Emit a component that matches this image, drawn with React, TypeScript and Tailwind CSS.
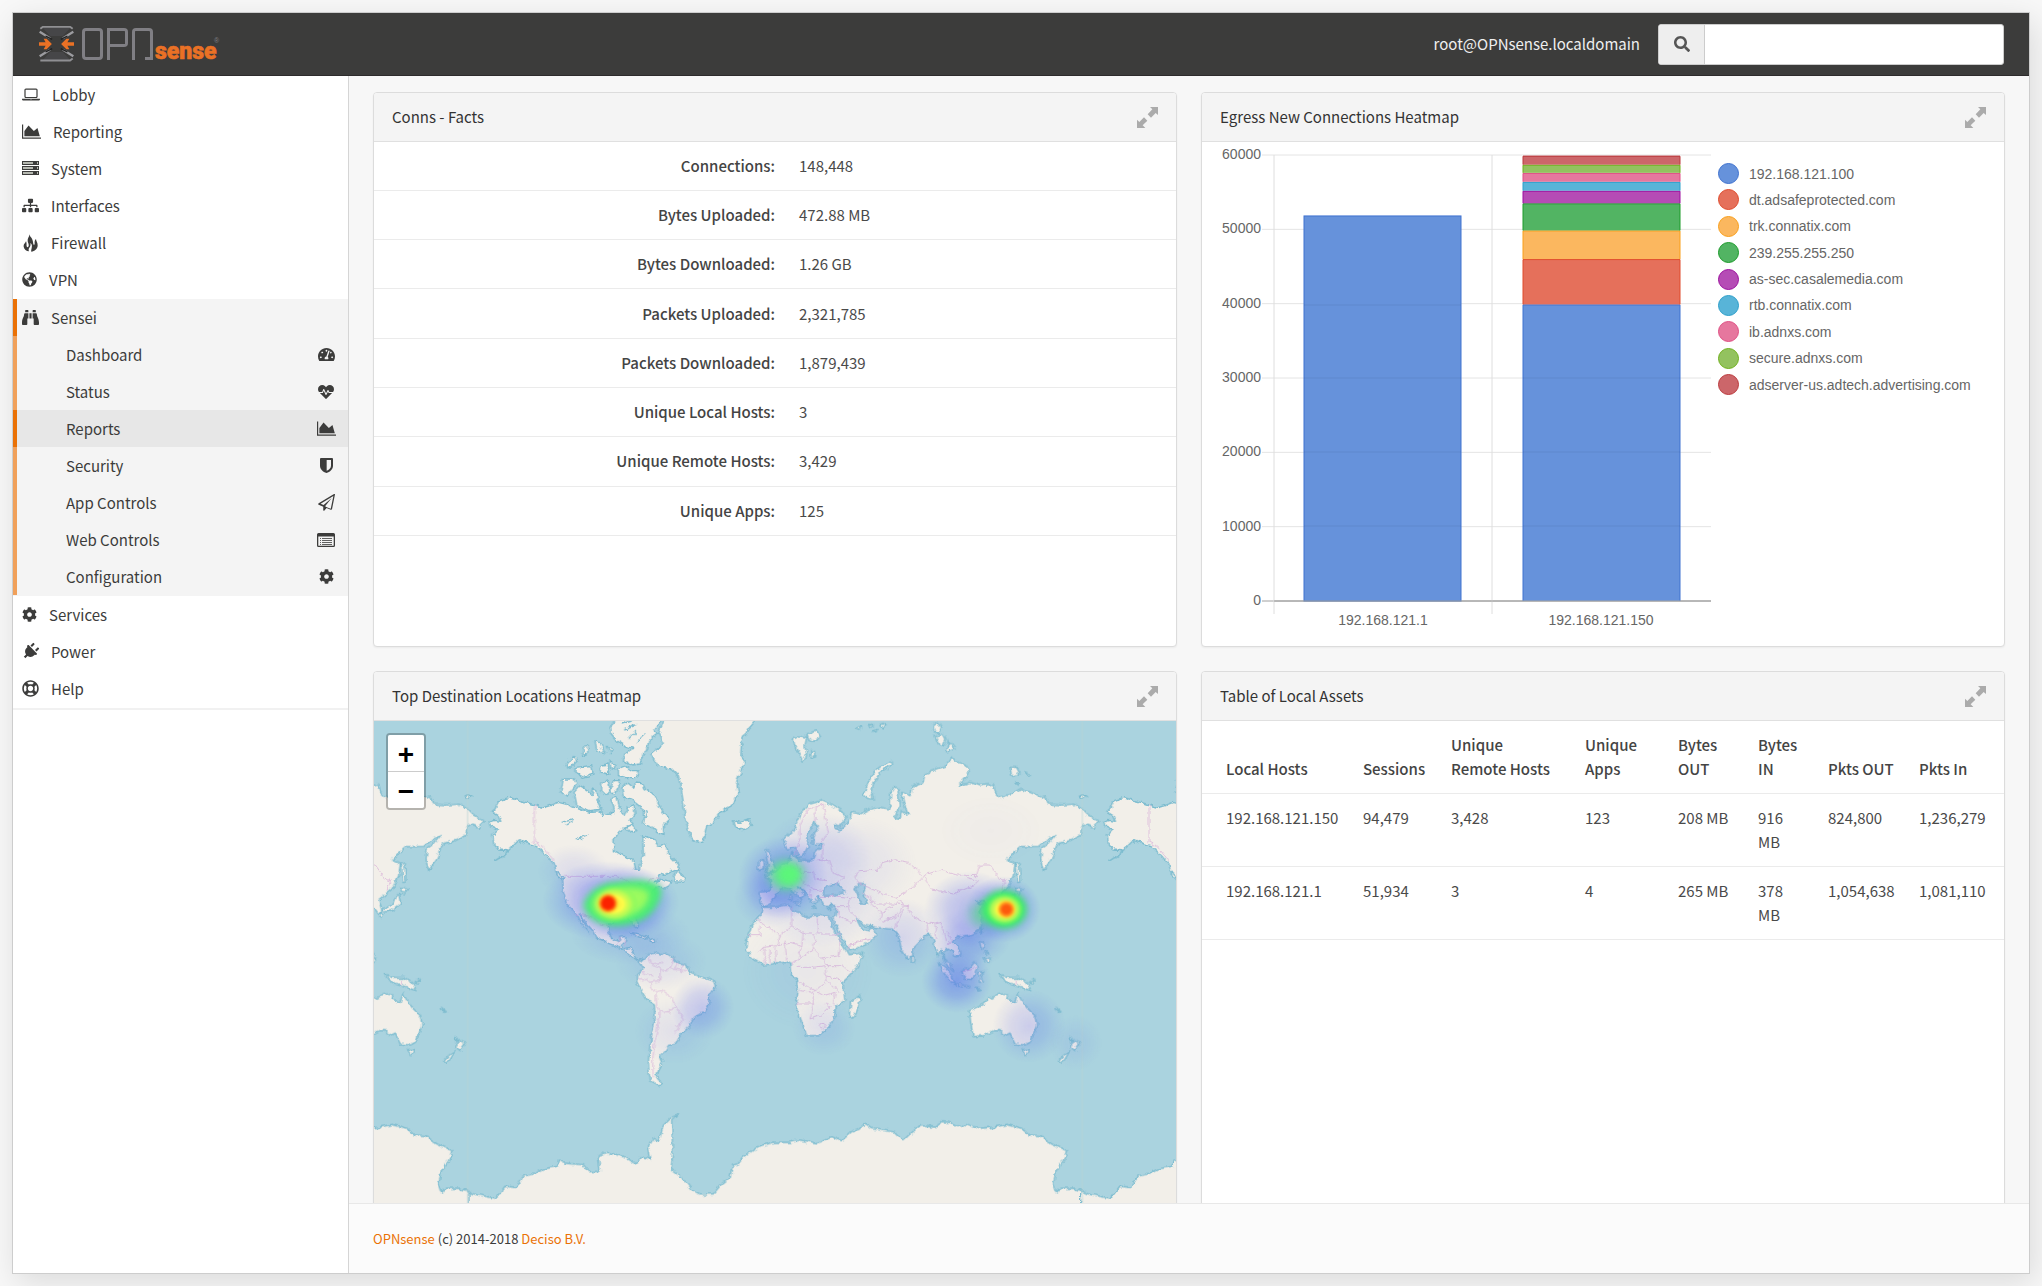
import { useState } from 'react'
import type { ReactNode } from 'react'
import {
  FaBinoculars,
  FaCog,
  FaGlobeAmericas,
  FaHeartbeat,
  FaPlug,
  FaRegLifeRing,
  FaSearch,
  FaSitemap,
  FaTachometerAlt,
} from 'react-icons/fa'

// ---------- icons that the package does not have ----------

function LaptopIcon({ className }: { className?: string }) {
  return (
    <svg viewBox="0 0 1920 1792" fill="currentColor" className={className}>
      <path d="M416 1280q-66 0-113-47t-47-113v-704q0-66 47-113t113-47h1088q66 0 113 47t47 113v704q0 66-47 113t-113 47h-1088zm-32-864v704q0 13 9.500 22.500t22.500 9.500h1088q13 0 22.500-9.500t9.500-22.500v-704q0-13-9.500-22.500t-22.500-9.500h-1088q-13 0-22.500 9.500t-9.500 22.500zm1376 928h160v96q0 40-47 68t-113 28h-1600q-66 0-113-28t-47-68v-96h1760zm-720 96q16 0 16-16t-16-16h-160q-16 0-16 16t16 16h160z" />
    </svg>
  )
}

function AreaIcon({ className }: { className?: string }) {
  return (
    <svg viewBox="0 0 2048 1792" fill="currentColor" className={className}>
      <path d="M2048 1536v128h-2048v-1536h128v1408h1920zm-384-1024l256 896h-1664v-576l448-576 576 576z" />
    </svg>
  )
}

function TasksIcon({ className }: { className?: string }) {
  return (
    <svg viewBox="0 0 17 15" fill="currentColor" className={className}>
      {[0, 5, 10].map(y => (
        <g key={y}>
          <rect x="0" y={y} width="17" height="4" />
          <rect x="1" y={y + 1} width="10" height="2" fill="#b5b8b0" />
          <rect x="15" y={y + 1} width="1" height="2" fill="#b5b8b0" />
        </g>
      ))}
    </svg>
  )
}

function FireIcon({ className }: { className?: string }) {
  return (
    <svg viewBox="0 0 51 54" fill="currentColor" className={className}>
      <path d="M23 1C21 10 16 13 17 22C18 28 21 30 20 36C19 40 15 41 14 37C13 33 15 28 12 21C11 27 4 29 5 38C6 46 13 51 21 52C18 46 21 42 24 38C26 34 26 31 25 27C31 30 30 37 29 42C28 47 27 50 28 53C38 51 46 45 47 35C48 26 42 22 42 15C37 19 38 24 38 29C38 33 35 34 34 30C33 25 33 20 30 14C27 10 23 7 23 1z" />
    </svg>
  )
}

function ShieldIcon({ className }: { className?: string }) {
  return (
    <svg viewBox="0 0 39 45" fill="currentColor" className={className}>
      <path fillRule="evenodd" d="M3 0h33q3 0 3 3v20c0 11-9 18-19.500 22C9 41 0 34 0 23V3q0-3 3-3zM20 6v32c7-3 13-8 13-15V6z" />
    </svg>
  )
}

function PlaneIcon({ className }: { className?: string }) {
  return (
    <svg viewBox="0 0 52 52" fill="currentColor" className={className}>
      <path fillRule="evenodd" d="M52 1L43 46Q42 49 39 48L26 43L19 51Q16 52 16 49V39L2 33Q-1 31 2 28L49 0Q52-1 52 1zM47 6L8 30L17 34L42 12L21 38L39 45z" />
      <path d="M20 37L27 41L18 50z" />
    </svg>
  )
}

function ListIcon({ className }: { className?: string }) {
  return (
    <svg viewBox="0 0 18 14" fill="currentColor" className={className}>
      <path fillRule="evenodd" d="M1.500 0h15A1.500 1.500 0 0 1 18 1.500v11a1.500 1.500 0 0 1-1.500 1.500h-15A1.500 1.500 0 0 1 0 12.500v-11A1.500 1.500 0 0 1 1.500 0zM1.300 3.500v9.200h15.400V3.500z" />
      <path d="M3 5h1v1H3zM5 5h10v1H5zM3 7h1v1H3zM5 7h10v1H5zM3 9h1v1H3zM5 9h10v1H5zM3 11h1v1H3zM5 11h10v1H5z" opacity=".8" />
    </svg>
  )
}

function ExpandIcon() {
  return (
    <svg viewBox="0 0 63 63" fill="currentColor" className="size-[21px]">
      <path d="M39 0h24v24l-7-6-14 14-10-10 14-15zM0 63V38l7 7 14-14 10 10-14 14 8 8z" />
    </svg>
  )
}

// ---------- data ----------

const topMenu = [
  { label: 'Lobby', icon: <LaptopIcon className="h-[17px] w-[18px]" /> },
  { label: 'Reporting', icon: <AreaIcon className="h-[17px] w-[19px]" /> },
  { label: 'System', icon: <TasksIcon className="h-[15px] w-[17px]" /> },
  { label: 'Interfaces', icon: <FaSitemap className="size-[17px]" /> },
  { label: 'Firewall', icon: <FireIcon className="h-[18px] w-[17px]" /> },
  { label: 'VPN', icon: <FaGlobeAmericas className="size-[15px]" /> },
]

const subMenu = [
  { label: 'Dashboard', icon: <FaTachometerAlt className="size-[17px]" /> },
  { label: 'Status', icon: <FaHeartbeat className="size-4" /> },
  { label: 'Reports', icon: <AreaIcon className="h-[17px] w-[19px]" />, active: true },
  { label: 'Security', icon: <ShieldIcon className="h-[15px] w-[13px]" /> },
  { label: 'App Controls', icon: <PlaneIcon className="size-[17px]" /> },
  { label: 'Web Controls', icon: <ListIcon className="h-[14px] w-[18px]" /> },
  { label: 'Configuration', icon: <FaCog className="size-[15px]" /> },
]

const bottomMenu = [
  { label: 'Services', icon: <FaCog className="size-[15px]" /> },
  { label: 'Power', icon: <FaPlug className="size-[17px] rotate-45" /> },
  { label: 'Help', icon: <FaRegLifeRing className="size-[17px]" /> },
]

const facts = [
  ['Connections:', '148,448'],
  ['Bytes Uploaded:', '472.88 MB'],
  ['Bytes Downloaded:', '1.26 GB'],
  ['Packets Uploaded:', '2,321,785'],
  ['Packets Downloaded:', '1,879,439'],
  ['Unique Local Hosts:', '3'],
  ['Unique Remote Hosts:', '3,429'],
  ['Unique Apps:', '125'],
]

// "to" is the running total at the top of the stacked segment
const series = [
  { name: '192.168.121.100', fill: '#6692db', line: '#3f72cf', to: 39900 },
  { name: 'dt.adsafeprotected.com', fill: '#e5705b', line: '#df4a2c', to: 46000 },
  { name: 'trk.connatix.com', fill: '#fbb75f', line: '#f99f1b', to: 49850 },
  { name: '239.255.255.250', fill: '#52b463', line: '#1d9b2b', to: 53500 },
  { name: 'as-sec.casalemedia.com', fill: '#b54cb5', line: '#9c0f9e', to: 55200 },
  { name: 'rtb.connatix.com', fill: '#58b4d8', line: '#2d9fca', to: 56400 },
  { name: 'ib.adnxs.com', fill: '#e6779e', line: '#df4f83', to: 57600 },
  { name: 'secure.adnxs.com', fill: '#93c25f', line: '#6fb01c', to: 58700 },
  { name: 'adserver-us.adtech.advertising.com', fill: '#cc666a', line: '#bb3a3d', to: 59900 },
]

const assetCols = [
  { label: 'Local Hosts', w: 'w-[149px]' },
  { label: 'Sessions', w: 'w-[88px]' },
  { label: 'Unique Remote Hosts', w: 'w-[134px]' },
  { label: 'Unique Apps', w: 'w-[93px]' },
  { label: 'Bytes OUT', w: 'w-[80px]' },
  { label: 'Bytes IN', w: 'w-[70px]' },
  { label: 'Pkts OUT', w: 'w-[91px]' },
  { label: 'Pkts In', w: 'w-[97px]' },
]

const assets = [
  ['192.168.121.150', '94,479', '3,428', '123', '208 MB', '916 MB', '824,800', '1,236,279'],
  ['192.168.121.1', '51,934', '3', '4', '265 MB', '378 MB', '1,054,638', '1,081,110'],
]

// ---------- header ----------

function Logo() {
  return (
    <a href="#" aria-label="OPNsense" className="flex items-start gap-2">
      <svg viewBox="0 0 106 108" className="h-9 w-[35px]">
        <path d="M10 4H96L72 30H34z M34 78H72L96 104H10z" fill="#464648" />
        <path d="M4 8L12 2H94L102 8M4 104H94L102 98" fill="none" stroke="#909093" strokeWidth="6" />
        <path d="M2 17L34 37M104 17L72 37M2 91L34 71M104 91L72 71" stroke="#9c9ca0" strokeWidth="7" />
        <path d="M20 30L40 40M86 30L66 40M20 78L40 68M86 78L66 68" stroke="#222" strokeWidth="4" />
        <path d="M0 49H20L14 38H23L39 54L23 70H14L20 59H0zM106 49H86L92 38H83L67 54L83 70H92L86 59H106z" fill="#ea7125" />
      </svg>
      <span className="flex gap-1 pt-[2px]">
        <span className="h-8 w-[21px] rounded-sm border-3 border-[#807f84]" />
        <span className="h-8 w-[21px] border-l-3 border-[#807f84]">
          <span className="block h-[19px] rounded-r-sm border-3 border-l-0 border-[#807f84]" />
        </span>
        <span className="flex h-8 w-[21px] flex-col items-end rounded-t-sm border-x-3 border-t-3 border-[#807f84]">
          <span className="mt-auto h-[3px] w-[5px] bg-[#807f84]" />
        </span>
      </span>
      <svg viewBox="0 0 80 36" className="-ml-[6px] h-9 w-20">
        <text x="0" y="33" fontSize="23" fontWeight="900" fill="#ea7125" stroke="#ea7125" strokeWidth="0.6" className="font-['Liberation_Sans_Narrow',Roboto,sans-serif]">sense</text>
        <text x="59" y="17" fontSize="7" fill="#807f84" className="font-['Liberation_Sans',sans-serif]">®</text>
      </svg>
    </a>
  )
}

function Header() {
  const [query, setQuery] = useState('')
  return (
    <header className="flex h-[63px] shrink-0 items-center justify-between border-b border-[#2d2b2c] bg-[#3c3c3b] pr-[25px] pl-[26px]">
      <Logo />
      <form className="flex items-center gap-[18px]" onSubmit={e => e.preventDefault()}>
        <label htmlFor="search" className="text-[#efefef]">root@OPNsense.localdomain</label>
        <div className="flex h-[41px] w-[346px] overflow-hidden rounded-[3px] border border-[#ccc] bg-white">
          <button type="submit" aria-label="Search" className="flex w-[46px] items-center justify-center border-r border-[#ccc] bg-[#eee] text-[#555]">
            <FaSearch className="size-4" />
          </button>
          <input
            id="search"
            type="text"
            value={query}
            onChange={e => setQuery(e.target.value)}
            className="min-w-0 flex-1 px-3 outline-none"
          />
        </div>
      </form>
    </header>
  )
}

// ---------- sidebar ----------

function MenuItem({ label, icon }: { label: string; icon: ReactNode }) {
  return (
    <li>
      <a href="#" className="flex h-[37px] items-center gap-3 pl-[9px]">
        {icon}
        {label}
      </a>
    </li>
  )
}

function Sidebar() {
  return (
    <nav className="w-[336px] shrink-0 border-r border-[#d5d5d5] bg-white">
      <div className="border-b-2 border-[#f1f1f1]">
        <ul className="pb-px">
          {topMenu.map(item => <MenuItem key={item.label} {...item} />)}
        </ul>
        <a href="#" className="flex h-[37px] items-center gap-3 border-l-4 border-[#ea7105] bg-[#f4f4f4] pl-[5px]">
          <FaBinoculars className="size-[17px]" />
          Sensei
        </a>
        <ul className="bg-[#f4f4f4] pb-px">
          {subMenu.map(item => (
            <li key={item.label}>
              <a
                href="#"
                className={
                  item.active
                    ? 'flex h-[37px] items-center justify-between border-l-4 border-[#ea7105] bg-[#e7e7e7] pr-3 pl-[49px]'
                    : 'flex h-[37px] items-center justify-between border-l-4 border-[#f0a05a] pr-3 pl-[49px]'
                }
              >
                {item.label}
                <span className="flex w-5 justify-center">{item.icon}</span>
              </a>
            </li>
          ))}
        </ul>
        <ul className="pb-px">
          {bottomMenu.map(item => <MenuItem key={item.label} {...item} />)}
        </ul>
      </div>
    </nav>
  )
}

// ---------- cards ----------

function Card({ title, children }: { title: string; children: ReactNode }) {
  return (
    <section className="flex h-[555px] flex-col overflow-hidden rounded border border-[#dcdcdc] bg-white shadow-xs">
      <div className="flex h-[49px] shrink-0 items-center justify-between border-b border-[#e0e0e0] bg-[#f4f4f4] px-[18px]">
        <h2 className="text-[#333]">{title}</h2>
        <button type="button" aria-label="Expand" className="text-[#ababab]">
          <ExpandIcon />
        </button>
      </div>
      {children}
    </section>
  )
}

function FactsTable() {
  return (
    <table className="h-[394px] w-full">
      <tbody>
        {facts.map(([label, value]) => (
          <tr key={label} className="border-b border-[#ebebeb]">
            <th scope="row" className="w-[51%] pr-2 text-right font-medium text-[#444]">{label}</th>
            <td className="pl-4 text-[#4a4a4a]">{value}</td>
          </tr>
        ))}
      </tbody>
    </table>
  )
}

const yOf = (v: number) => 459 - (v * 446) / 60000

function BarChart() {
  return (
    <div className="flex items-start">
      <svg viewBox="0 0 516 500" fontSize="14" fill="#666" className="h-[500px] w-[516px] font-['Liberation_Sans',Arial,sans-serif]">
        {[0, 10000, 20000, 30000, 40000, 50000, 60000].map(v => (
          <g key={v}>
            <path d={`M60 ${yOf(v)}H509`} stroke={v === 0 ? '#a0a0a0' : '#e4e4e4'} />
            <text x="59" y={yOf(v) + 4} textAnchor="end">{v}</text>
          </g>
        ))}
        <path d="M72 13V472M290 13V472" stroke="#dedede" />
        <rect x="102" y={yOf(51800)} width="157" height={459 - yOf(51800)} fill="#6692db" stroke="#3f72cf" />
        {series.map((s, i) => {
          const from = i === 0 ? 0 : series[i - 1].to
          return (
            <g key={s.name}>
              <rect x="321" y={yOf(s.to)} width="157" height={yOf(from) - yOf(s.to)} fill={s.fill} />
              <path d={`M321 ${yOf(from)}V${yOf(s.to) + 0.5}H478V${yOf(from)}`} fill="none" stroke={s.line} />
            </g>
          )
        })}
        <path d="M102 163H259M102 236H259M102 310H259M102 384H259M321 236H478M321 310H478M321 384H478" stroke="#000" opacity=".06" />
        <path d="M72 459H509" stroke="#a0a0a0" />
        <text x="181" y="483" textAnchor="middle">192.168.121.1</text>
        <text x="399" y="483" textAnchor="middle">192.168.121.150</text>
      </svg>
      <ul className="mt-[21px] flex h-[232px] flex-col justify-between font-['Liberation_Sans',Arial,sans-serif] text-sm text-[#666]">
        {series.map(s => (
          <li key={s.name} className="flex h-[21px] items-center gap-2.5">
            <span className="size-[21px] rounded-full border" style={{ backgroundColor: s.fill, borderColor: s.line }} />
            {s.name}
          </li>
        ))}
      </ul>
    </div>
  )
}

function AssetsTable() {
  return (
    <table className="w-full table-fixed text-left text-[#4a4a4a]">
      <thead>
        <tr className="border-b border-[#ebebeb] align-bottom text-[#444]">
          {assetCols.map(c => (
            <th key={c.label} scope="col" className={`${c.w} px-3 py-3 font-medium first:pl-6`}>{c.label}</th>
          ))}
        </tr>
      </thead>
      <tbody>
        {assets.map(row => (
          <tr key={row[0]} className="border-b border-[#ebebeb] align-top">
            {row.map((cell, i) => (
              <td key={i} className="px-3 py-3 first:pl-6">{cell}</td>
            ))}
          </tr>
        ))}
      </tbody>
    </table>
  )
}

// ---------- map ----------

// One full turn of the globe is 1844 units wide; copies on either side wrap it.
function World() {
  return (
    <g id="world">
      <g fill="#f2efe9" stroke="#7dbccf" strokeWidth="4" strokeLinejoin="round" filter="url(#rough)">
        {/* north america, greenland, arctic islands */}
        <g transform="translate(-12 -186)">
          <path d="M357 490L375 484 392 487 385 470 365 458 375 450 388 425 415 416 440 422 470 430 493 438 520 446 545 438 565 430 590 436 612 445 640 455 662 460 690 458 700 470 715 462 730 465 732 445 722 418 740 415 752 455 765 470 775 445 792 440 795 465 780 485 790 495 765 505 745 520 732 545 733 575 760 590 790 603 797 630 808 632 812 610 820 590 818 530 850 540 868 565 885 555 900 590 925 615 928 630 900 640 870 650 855 672 880 662 905 668 898 680 880 690 862 680 845 700 830 720 825 745 795 770 800 790 803 808 795 805 788 785 760 780 735 785 715 797 716 820 725 838 748 845 750 835 768 832 765 850 755 858 762 870 780 865 790 885 800 898 822 902 815 912 785 893 760 875 740 862 715 853 680 835 672 818 650 795 628 762 655 818 640 802 622 768 590 735 580 700 578 665 560 645 552 615 530 590 500 560 470 552 445 545 425 565 400 590 372 607 405 585 412 572 385 570 372 560 368 530 385 512 360 500Z" />
          <path d="M885 176L1165 176 1135 210 1115 245 1112 290 1122 305 1112 340 1100 370 1105 400 1085 440 1050 460 1030 490 1010 500 998 550 985 550 970 545 955 510 945 470 940 430 935 400 925 350 905 330 865 322 843 285 880 255 865 225Z" />
          <path d="M1090 485L1110 490 1138 482 1145 498 1120 515 1098 507Z" />
          <path d="M735 176L722 205 724 225 740 245 768 262 790 268 765 285 760 305 785 318 815 315 812 300 833 265 842 240 862 225 850 215 880 176Z" />
          <path d="M760 210L800 196M775 240L800 215M800 250L825 225M755 195L785 186" fill="none" />
          <path d="M745 330L770 320 780 335 806 335 803 355 770 356 745 350Z" />
          <path d="M755 385L770 370 790 385 800 372 820 375 825 390 850 405 865 435 880 460 900 480 880 500 882 530 860 520 845 505 820 495 825 460 810 440 785 420 760 415Z" />
          <path d="M612 400L630 380 655 395 665 410 670 390 680 395 685 430 695 450 660 455 620 440Z" />
          <path d="M580 360L610 360 620 375 600 400 590 412 572 398Z" />
          <path d="M588 320L610 292 622 305 600 328ZM635 290L640 265 655 262 652 285ZM615 325L665 320 672 345 640 355 615 340ZM675 245L690 250 705 285 680 275ZM712 262L728 268 722 285ZM693 318L715 315 715 345 690 340ZM720 305L738 320 735 330 722 325ZM695 375L715 365 720 390 710 410 695 395ZM728 365L748 365 745 395 730 405 722 400ZM768 505L785 498 800 515 785 522ZM820 455L832 460 830 472 820 470ZM286 413L296 407 308 412 295 419Z" />
          <path d="M910 655L925 632 945 660 940 670 915 668ZM562 638L584 658 578 662 560 646ZM780 820L810 825 835 838 825 840 795 830ZM837 842L858 838 860 848 838 848Z" />
          <path d="M575 490L610 482M590 498L608 488M620 540L652 528M625 535L640 543" fill="none" />
        </g>
        {/* south america */}
        <path transform="translate(-12 654)" d="M805 60L820 65 830 50 855 40 900 50 920 70 950 78 958 100 995 115 1030 125 1036 140 1018 170 1015 200 1003 222 970 235 960 260 930 290 918 315 895 320 885 335 870 350 878 370 865 395 860 415 878 438 865 440 845 430 838 410 835 370 838 330 845 290 855 240 853 195 830 180 815 155 802 128 803 105 818 90Z" />
        <g transform="translate(1218 -186)">
          {/* eurasia */}
          <path d="M125 425L160 440 190 460 198 475 180 505 160 495 165 510 180 515 205 490 215 460 240 465 270 450 300 445 330 450 332 400 345 380 355 400 358 440 345 475 360 478 365 455 385 468 370 430 365 400 390 410 400 380 430 370 435 345 470 330 500 320 515 293 530 310 555 315 568 335 560 355 535 380 570 370 600 380 640 375 645 400 660 415 695 405 720 390 750 400 800 420 805 435 850 438 880 435 905 450 920 465 957 488 940 505 915 495 905 505 902 528 870 545 830 555 822 575 815 600 790 635 782 600 785 570 805 555 825 530 800 542 775 562 720 563 700 580 682 605 705 615 700 650 680 690 655 710 640 722 650 755 640 765 625 745 615 725 590 728 600 740 612 737 600 755 608 790 595 815 570 830 545 835 530 830 520 850 540 870 543 890 525 893 520 880 500 868 490 880 495 900 512 915 518 935 505 925 490 895 484 870 472 890 462 850 450 825 435 830 400 865 398 890 383 900 365 870 350 820 335 810 310 808 275 803 250 800 235 780 232 785 245 810 270 815 275 805 290 825 270 850 210 875 195 850 175 815 158 778 165 770 168 740 130 738 120 720 118 710 105 735 95 725 85 710 70 695 52 680 75 710 60 720 48 705 30 690 15 685 0 690 -15 710 -30 735 -45 742 -60 735 -62 700 -30 695 -25 665 -45 655 -20 640 0 625 20 610 32 600 35 580 45 590 60 603 95 605 105 580 130 555 100 555 98 535 115 500 100 490 80 535 85 560 70 590 55 595 48 565 20 570 10 540 40 515 65 460 90 435Z" />
          <path fill="#aad3df" d="M130 700L140 680 160 675 180 678 195 700 165 708 135 710ZM225 690L240 672 258 675 250 700 262 735 240 735 235 710Z" />
          <path d="M-42 572L-28 575 -30 590 -15 625 -12 635 -45 640 -35 620 -40 600ZM-65 610L-50 600 -46 625 -66 632ZM28 708L36 708 35 722 28 720ZM40 728L60 728 55 738ZM95 742L110 744 100 748ZM140 748L152 744 146 752Z" />
          <path d="M250 405L265 370 280 340 305 320 335 305 338 315 300 340 280 375 275 400 280 420 262 418Z" />
          <path d="M40 240L60 230 80 235 75 260 80 285 70 310 58 285 45 265ZM80 225L110 215 122 235 100 247 85 240ZM92 275L104 278 104 293 94 296ZM460 200L475 190 485 205 475 222 460 215ZM465 230L490 225 498 240 490 260 475 255ZM505 245L525 270 500 278ZM690 325L710 325 720 345 695 352ZM735 338L755 348 745 352ZM705 372L718 374 712 380ZM226 208L245 202 240 214ZM265 196L280 200 270 206ZM300 200L318 194 310 210ZM280 215L292 212 288 222Z" />
          <path d="M708 612L718 615 722 670 712 670 710 640ZM705 688L728 690 720 702 708 700ZM700 705L706 735 680 755 650 760 655 750 685 735 693 712ZM643 762L655 764 650 778 644 774ZM601 808L607 810 603 824Z" />
          {/* africa */}
          <path d="M-50 745L-20 745 20 738 30 740 35 755 60 765 85 775 100 768 148 772 162 815 184 850 205 887 248 882 240 910 215 945 188 970 195 1025 165 1045 165 1070 150 1100 120 1130 80 1130 62 1080 47 1030 55 995 50 965 35 945 33 915 15 910 -10 912 -30 915 -50 918 -85 895 -102 870 -100 840 -85 800 -60 770Z" />
        </g>
        {/* south-east asia and oceania */}
        <g transform="translate(1218 654)">
          <path d="M238 170L242 180 235 205 222 237 208 230 212 190ZM395 52L402 60 400 70 394 68ZM475 72L500 90 525 128 515 130 490 100ZM525 133L570 142 568 147 530 140ZM545 97L565 92 585 68 592 80 580 118 555 118ZM597 100L612 98 603 110 610 128 598 130ZM600 8L610 10 612 25 603 28ZM612 55L630 55 630 70 618 68ZM620 35L626 45 616 42ZM585 147L605 150 595 154ZM660 105L680 115 715 115 740 130 755 155 720 145 690 135 670 122ZM748 130L765 120 760 132ZM828 208L840 218 834 220Z" />
          <path d="M568 215L610 195 625 180 650 170 665 165 683 168 680 180 705 190 713 160 722 180 740 205 765 230 770 260 750 310 735 318 705 315 690 285 680 290 660 275 640 275 610 290 580 293 575 270ZM726 332L746 332 738 350ZM870 292L882 308 900 312 885 335 873 325 878 315ZM870 335L855 360 845 372 835 368 850 350Z" />
        </g>
        {/* antarctica */}
        <path transform="translate(-12 654)" d="M288 1000L288 755 310 765 378 778 405 742 437 745 458 712 490 705 520 690 562 682 565 663 585 673 640 677 658 698 690 697 685 650 710 640 760 652 795 672 815 652 842 660 835 625 850 598 865 608 880 560 905 535 922 528 905 545 908 640 903 690 935 715 965 752 990 765 1030 765 1055 735 1080 715 1088 678 1105 675 1120 655 1165 622 1210 610 1260 610 1290 603 1340 612 1385 593 1415 605 1445 578 1470 568 1485 553 1510 570 1570 578 1598 605 1650 560 1700 565 1708 548 1740 550 1775 565 1790 553 1820 568 1870 565 1910 556 1955 568 1975 587 2010 590 2045 615 2090 635 2080 665 2058 695 2050 730 2060 760 2070 748 2110 748 2140 755 2140 1000Z" />
      </g>
      {/* borders */}
      <g fill="none" stroke="#dcb9da" strokeWidth="3" opacity=".85" filter="url(#rough)">
        <path transform="translate(-12 -186)" d="M493 438V550L515 560 540 590 552 605M585 652H735L765 660 790 680 830 672 850 655 870 660M615 765L640 768 670 775 690 795 716 800M740 858L750 835M762 845L768 860" />
        <path transform="translate(-12 654)" d="M838 55L845 75 870 90 870 125 840 130 842 150 860 158 875 155 905 175 920 205 898 210 900 222 868 218 860 200 858 160M868 218L862 270 852 320 848 370 850 415M920 205L940 240 925 265 915 280M940 245L918 262M805 125L825 118 840 130M870 95L900 90 910 60M905 90L950 95M935 75L935 95M925 72L918 90M815 100L850 110M845 75L880 70" />
        <g transform="translate(1218 -186)">
          <path d="M45 590L60 540 60 500 85 450 105 445 130 435 135 470 145 520 125 550M105 445L105 490M128 560L128 600 105 605M105 605L148 605 160 640 190 655 165 680M50 610L60 640 100 640 105 660 140 665M0 640L20 650 35 680M60 640L30 620M60 660L100 690 130 695M20 650L60 660M90 690L95 715M225 655L240 635 300 630 305 612 345 602 385 610 430 650 400 685 345 715 320 710 275 690 235 670ZM430 650L480 632 530 648 590 650 600 618 630 618 660 660 675 665 665 695M432 652L455 690 520 705 580 680 595 665 560 655M345 715L380 740 395 770 430 790 465 795 485 790 490 820 500 850M120 712L180 712 225 718M168 745L175 770 210 790 230 785M210 720L205 750 235 780M165 740L205 740M275 710L275 740 305 760 300 785M305 760L350 735 385 740M305 790L345 775 370 740M370 750L345 810M440 790L445 820M465 800L470 840M205 875L210 855 270 840M500 820L520 845 500 860M245 700L290 735 345 735" />
          <path d="M35 740L35 800 70 825 105 825M112 775V825H180M-70 780L0 830 35 800M-100 830H-60L-60 800M0 830L-5 860-50 865-65 880M-50 865L-45 915M-30 870V912M-15 865L-10 912M15 845L20 905M-5 860L30 850 65 860 70 820M65 860L55 900 35 915M105 825L100 870 55 900M100 870L130 900 175 890 180 830M130 900L140 920 190 920M50 925H100L135 920 140 965 100 1000 60 995M140 965L180 1000M100 1000V1035H47M100 1035L90 1080 120 1070 150 1040 135 1035M60 970L90 985 130 1010 165 1000M165 1000L160 1040M185 965L140 950M175 890L185 870M215 940L185 920" />
          <circle cx="128" cy="1100" r="7" />
        </g>
        <path transform="translate(1218 654)" d="M706 118V140M550 98L575 92 588 80" />
      </g>
    </g>
  )
}

// Soft blue halos: [x, y, rx, ry, opacity]
const halos = [
  [700, 540, 195, 120, 0.85],
  [760, 545, 155, 110, 0.7],
  [600, 450, 110, 80, 0.2],
  [770, 640, 180, 90, 0.3],
  [1228, 470, 135, 125, 0.8],
  [1190, 530, 110, 90, 0.35],
  [1330, 410, 170, 140, 0.28],
  [1440, 430, 190, 150, 0.14],
  [1350, 560, 200, 120, 0.2],
  [1585, 650, 120, 120, 0.28],
  [1790, 565, 140, 115, 0.6],
  [1887, 565, 112, 100, 1],
  [1790, 650, 120, 90, 0.45],
  [1748, 780, 105, 95, 0.7],
  [1760, 700, 100, 100, 0.25],
  [985, 860, 95, 95, 0.45],
  [900, 930, 120, 100, 0.16],
  [860, 720, 140, 90, 0.18],
  [1965, 915, 110, 110, 0.38],
  [2105, 965, 80, 85, 0.14],
  [1350, 920, 95, 85, 0.18],
  [1300, 750, 200, 180, 0.08],
  [1850, 330, 160, 110, 0.03],
]

function HeatMap() {
  return (
    <div className="relative flex-1 overflow-hidden bg-[#aad3df]">
      <svg viewBox="0 0 2406 1512" preserveAspectRatio="xMidYMin slice" className="size-full">
        <defs>
          <filter id="rough" x="-5%" y="-5%" width="110%" height="110%">
            <feTurbulence type="fractalNoise" baseFrequency="0.06" numOctaves="3" seed="4" />
            <feDisplacementMap in="SourceGraphic" scale="16" xChannelSelector="R" yChannelSelector="G" />
          </filter>
          <filter id="soft" x="-40%" y="-40%" width="180%" height="180%">
            <feGaussianBlur stdDeviation="9" />
          </filter>
          <filter id="wide" x="-60%" y="-60%" width="220%" height="220%">
            <feGaussianBlur stdDeviation="16" />
          </filter>
          <filter id="tight" x="-40%" y="-40%" width="180%" height="180%">
            <feGaussianBlur stdDeviation="4" />
          </filter>
          <radialGradient id="halo">
            <stop offset="0" stopColor="#4a5cf0" stopOpacity=".62" />
            <stop offset=".5" stopColor="#5566ee" stopOpacity=".42" />
            <stop offset="1" stopColor="#6a80f0" stopOpacity="0" />
          </radialGradient>
          <radialGradient id="hot">
            <stop offset="0" stopColor="#ffe93a" />
            <stop offset=".4" stopColor="#fdfb48" />
            <stop offset=".7" stopColor="#b8fb55" stopOpacity=".8" />
            <stop offset="1" stopColor="#6cf860" stopOpacity="0" />
          </radialGradient>
        </defs>
        <World />
        <use href="#world" x="-1844" />
        <use href="#world" x="1844" />
        <path d="M281 0V1512M2125 0V1512" stroke="#b9d3d4" strokeWidth="2" />

        {halos.map(([x, y, rx, ry, o], i) => (
          <ellipse key={i} cx={x} cy={y} rx={rx} ry={ry} fill="url(#halo)" opacity={o} />
        ))}

        {/* united states */}
        <path d="M628 555C635 515 680 482 730 482C780 472 862 472 862 512C858 555 825 595 785 604C745 622 650 625 628 555Z" fill="#48f070" filter="url(#soft)" opacity=".95" />
        <path d="M700 510C760 490 825 500 825 522C820 560 790 580 740 588C700 590 680 540 700 510Z" fill="#9cfb5e" filter="url(#soft)" />
        <ellipse cx="718" cy="549" rx="75" ry="58" fill="url(#hot)" />
        <circle cx="702" cy="547" r="28" fill="#ffb020" filter="url(#tight)" />
        <circle cx="702" cy="547" r="22" fill="#fb2400" filter="url(#tight)" />
        {/* europe */}
        <ellipse cx="1238" cy="462" rx="52" ry="44" fill="#58ee80" filter="url(#wide)" opacity=".9" />
        <ellipse cx="1246" cy="460" rx="30" ry="28" fill="#5cf878" filter="url(#soft)" opacity=".9" />
        {/* korea and japan */}
        <ellipse cx="1820" cy="580" rx="32" ry="36" fill="#60d890" filter="url(#wide)" opacity=".7" />
        <ellipse cx="1890" cy="565" rx="68" ry="58" fill="#40ee68" filter="url(#soft)" />
        <ellipse cx="1892" cy="565" rx="58" ry="50" fill="url(#hot)" />
        <circle cx="1897" cy="565" r="25" fill="#ffb428" filter="url(#tight)" />
        <circle cx="1897" cy="565" r="18" fill="#fd5a10" filter="url(#tight)" />
      </svg>
      <div className="absolute top-3 left-3 flex w-10 flex-col overflow-hidden rounded border-2 border-black/25 bg-clip-padding font-['Liberation_Sans',Arial,sans-serif] text-[28px] font-bold text-black">
        <button type="button" aria-label="Zoom in" className="flex h-[37px] items-center justify-center border-b border-[#ccc] bg-white pt-1">+</button>
        <button type="button" aria-label="Zoom out" className="flex h-9 items-center justify-center bg-white pt-1">−</button>
      </div>
    </div>
  )
}

// ---------- page ----------

export default function App() {
  return (
    <div className="h-screen bg-[#f8f8f8] p-3 font-['Noto_Sans_CJK_SC','Noto_Sans',sans-serif] text-[15px] leading-6 text-[#3c3c3b]">
      <div className="flex h-full flex-col border border-[#cdcdcd] shadow-[4px_8px_30px_rgba(0,0,0,0.12)]">
        <Header />
        <div className="flex min-h-0 flex-1">
          <Sidebar />
          <div className="flex min-w-0 flex-1 flex-col">
            <main className="grid flex-1 grid-cols-2 content-start gap-6 overflow-hidden bg-[#f7f7f7] px-6 pt-4">
              <Card title="Conns - Facts"><FactsTable /></Card>
              <Card title="Egress New Connections Heatmap"><BarChart /></Card>
              <Card title="Top Destination Locations Heatmap"><HeatMap /></Card>
              <Card title="Table of Local Assets"><AssetsTable /></Card>
            </main>
            <footer className="flex h-[70px] shrink-0 items-center gap-[3px] border-t border-[#e8e8e8] bg-[#fbfbfb] px-6 text-[13px]">
              <a href="#" className="text-[#ea7105]">OPNsense</a>
              <span>(c) 2014-2018</span>
              <a href="#" className="text-[#ea7105]">Deciso B.V.</a>
            </footer>
          </div>
        </div>
      </div>
    </div>
  )
}
